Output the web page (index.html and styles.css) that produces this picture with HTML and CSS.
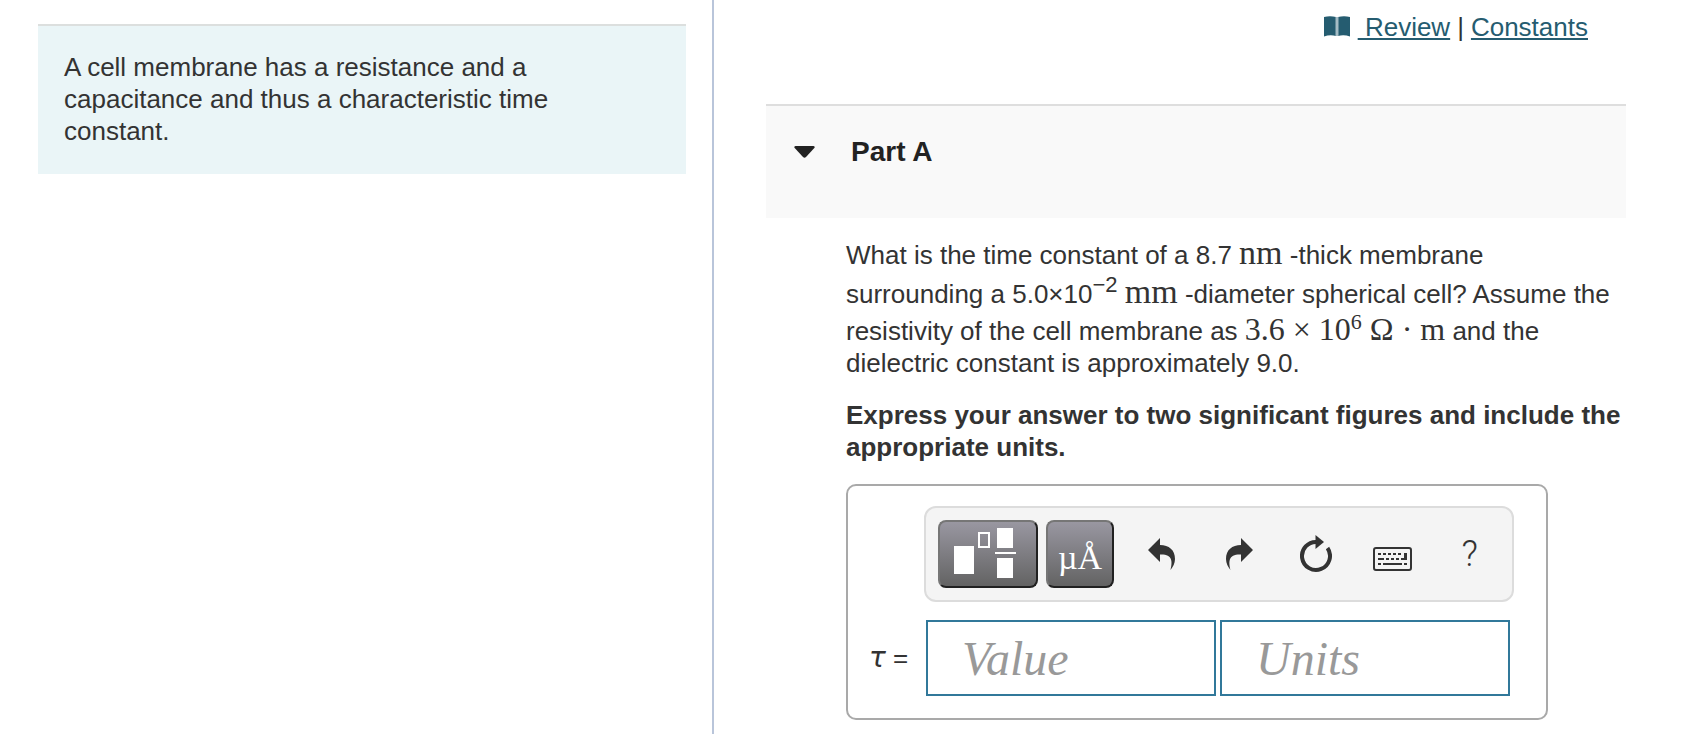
FILE: index.html
```html
<!DOCTYPE html>
<html lang="en">
    <head>
        <meta charset="UTF-8" />
        <meta name="viewport" content="width=device-width, initial-scale=1.0" />
        <title>Cell membrane | Part A</title>
        <link rel="stylesheet" href="styles.css">
    </head>
    <body>
        <div class="page">
            <aside class="intro">
                <p class="intro_text">A cell membrane has a resistance and a capacitance and thus a characteristic time constant.</p>
            </aside>

            <main class="problem">
                <nav class="links">
                    <svg class="book" viewBox="0 0 26 22" aria-hidden="true">
                        <path d="M0 1Q6-.5 12 1V20Q6 18.500 0 20.500zM14 1Q20-.5 26 1V20.500Q20 18.500 14 20z" />
                        <path class="spine" d="M11.500 1h3V20h-3z" />
                    </svg>
                    <a href="#review">&nbsp;Review</a>
                    <span class="bar">|</span>
                    <a href="#constants">Constants</a>
                </nav>

                <header class="part">
                    <button class="toggle" type="button" aria-label="Collapse Part A">
                        <svg viewBox="0 0 22 12"><path d="M1.500 0h18q2 .5 .8 2L12 11q-1.500 1.500-3 0L.7 2Q-.5 .5 1.500 0z" /></svg>
                    </button>
                    <h2>Part A</h2>
                </header>

                <div class="content">
                    <p class="question">What is the time constant of a 8.7 <span class="math unit">nm</span> -thick membrane surrounding a 5.0×10<sup>−2</sup> <span class="math unit">mm</span> -diameter spherical cell? Assume the resistivity of the cell membrane as <span class="math">3.6 × 10<sup>6</sup> Ω · m</span> and the dielectric constant is approximately 9.0.</p>
                    <p class="instructions">Express your answer to two significant figures and include the appropriate units.</p>

                    <form class="answer">
                        <div class="toolbar">
                            <button class="key templates" type="button" aria-label="Templates">
                                <svg viewBox="16 8 68 52">
                                    <path d="M16 26h20v28H16zM59 8h16v20H59zM57 32h21v2H57zM59 38h16v20H59z" />
                                    <path class="outline" d="M41 13h10v14H41z" />
                                </svg>
                            </button>
                            <button class="key symbols" type="button" aria-label="Symbols">µÅ</button>
                            <div class="tools">
                                <button class="tool" type="button" aria-label="Undo">
                                    <svg width="28" height="32" viewBox="0 0 28 32"><path d="M0 12L12 0v7c9 0 15 5 15 14 0 4-2 8-4.500 11C24.500 24 25 16 12 16.500V24z" /></svg>
                                </button>
                                <button class="tool" type="button" aria-label="Redo">
                                    <svg width="28" height="32" viewBox="0 0 28 32"><path d="M28 12L16 0v7C7 7 1 12 1 21c0 4 2 8 4.500 11C3.500 24 3 16 16 16.500V24z" /></svg>
                                </button>
                                <button class="tool" type="button" aria-label="Reset">
                                    <svg width="32" height="38" viewBox="0 0 32 38">
                                        <path class="ring" d="M17 7A14 14 0 1 0 27.500 13" />
                                        <path d="M15.500 0l8.500 7-8.500 7z" />
                                    </svg>
                                </button>
                                <button class="tool keyboard" type="button" aria-label="Keyboard shortcuts">
                                    <svg width="40" height="24" viewBox="0 0 40 24">
                                        <rect class="case" x="1" y="1" width="37" height="22" rx="2" />
                                        <path d="M5 6h3v2H5zM10 6h3v2h-3zM15 6h3v2h-3zM20 6h3v2h-3zM25 6h3v2h-3zM31 6h3v7h-6v-2h3zM5 11h6v2H5zM13 11h3v2h-3zM18 11h3v2h-3zM23 11h3v2h-3zM5 16h3v2H5zM10 16h19v2H10zM31 16h3v2h-3z" />
                                    </svg>
                                </button>
                                <button class="tool help" type="button" aria-label="Help">?</button>
                            </div>
                        </div>

                        <label class="symbol" for="value"><i>τ</i> =</label>
                        <div class="fields">
                            <input type="text" id="value" placeholder="Value" />
                            <input type="text" id="units" placeholder="Units" aria-label="Units" />
                        </div>
                    </form>
                </div>
            </main>
        </div>
    </body>
</html>
```

FILE: styles.css
```css
* {
    margin: 0;
    padding: 0;
    box-sizing: border-box;
}
body {
    background: #fff;
    color: #333;
    font-family: 'Liberation Sans', Arial, sans-serif;
    font-size: 26px;
    line-height: 32px;
}
button {
    font: inherit;
    color: inherit;
    background: none;
    border: none;
    cursor: pointer;
}
svg {
    display: block;
    fill: #333;
}
.page {
    display: flex;
    min-height: 100vh;
}

.intro {
    flex: 0 0 42%;
    padding: 24px 26px 0 38px;
    border-right: 2px solid #b9c5da;
}
.intro_text {
    padding: 25px 26px 27px;
    background: #eaf5f7;
    border-top: 2px solid #dcdfde;
}

.problem {
    flex: 1;
    min-width: 0;
    padding: 11px 74px 0 52px;
}
.links {
    display: flex;
    justify-content: flex-end;
    padding-right: 38px;
    margin-bottom: 61px;
}
.links a {
    color: #255c70;
    text-decoration: underline;
    text-decoration-thickness: 2px;
    text-underline-offset: 2px;
}
.book {
    width: 26px;
    height: 22px;
    margin: 5px 8px 0 0;
    fill: #255c70;
}
.book .spine {
    fill: #a5bcc5;
}
.bar {
    margin: 0 7px;
}

.part {
    display: flex;
    align-items: flex-start;
    gap: 35px;
    padding: 30px 28px 50px;
    background: #f9f9f9;
    border-top: 2px solid #dedede;
    color: #222;
}
.part h2 {
    font-size: 28px;
}
.toggle {
    display: flex;
    align-items: center;
    height: 32px;
}
.toggle svg {
    width: 22px;
    height: 12px;
    fill: #222;
}

.content {
    padding: 21px 0 14px 80px;
}
.question {
    padding-right: 12px;
    margin-bottom: 20px;
}
.instructions {
    margin-bottom: 21px;
    font-weight: bold;
}
sup {
    font-size: 22px;
    line-height: 27px;
    vertical-align: 11px;
}
.math {
    font-family: 'Liberation Serif', 'Times New Roman', serif;
    font-size: 32px;
    line-height: 28px;
}
.math sup {
    line-height: 24px;
}
.unit {
    font-size: 34px;
}

.answer {
    display: grid;
    grid-template-columns: 76px minmax(0, 1fr);
    row-gap: 18px;
    align-items: center;
    max-width: 702px;
    padding: 20px 32px 22px 0;
    border: 2px solid #a9a9a9;
    border-radius: 10px;
}
.toolbar {
    grid-column: 2;
    display: flex;
    gap: 8px;
    padding: 12px 4px 12px 12px;
    background: #f4f4f4;
    border: 2px solid #dcdcdc;
    border-radius: 12px;
}
.key {
    display: flex;
    align-items: center;
    justify-content: center;
    width: 68px;
    height: 68px;
    color: #fff;
    background: linear-gradient(#9997a1, #636363);
    border: 2px solid;
    border-color: #767676 #212121 #212121 #767676;
    border-radius: 8px;
}
.templates {
    width: 100px;
}
.templates svg {
    width: 68px;
    height: 52px;
    fill: #fff;
}
.templates .outline {
    fill: none;
    stroke: #fff;
    stroke-width: 2;
}
.symbols {
    padding-top: 8px;
    font-family: 'Liberation Serif', 'Times New Roman', serif;
    font-size: 34px;
}
.tools {
    flex: 1;
    display: flex;
    padding-left: 2px;
}
.tool {
    flex: 1;
    display: flex;
    align-items: center;
    justify-content: center;
}
.tool .ring {
    fill: none;
    stroke: #333;
    stroke-width: 4;
}
.keyboard {
    padding-top: 10px;
}
.keyboard .case {
    fill: none;
    stroke: #333;
    stroke-width: 2;
}
.help {
    font-family: Roboto, sans-serif;
    font-size: 36px;
    font-weight: 300;
}

.symbol {
    padding-left: 21px;
    white-space: nowrap;
}
.symbol i {
    font-family: 'DejaVu Sans', sans-serif;
    font-size: 28px;
}
.fields {
    display: flex;
    gap: 4px;
    padding: 0 4px 0 2px;
}
.fields input {
    flex: 1;
    min-width: 0;
    height: 76px;
    padding: 0 34px;
    border: 2px solid #31789a;
    background: #fff;
    color: #333;
    font-family: 'Liberation Serif', 'Times New Roman', serif;
    font-size: 48px;
}
.fields input::placeholder {
    color: #999;
    font-style: italic;
}

@media (max-width: 1100px) {
    .page {
        flex-direction: column;
    }
    .intro {
        flex: none;
        border-right: none;
    }
    .problem {
        padding: 24px 26px;
    }
    .content {
        padding-left: 0;
    }
}
```
